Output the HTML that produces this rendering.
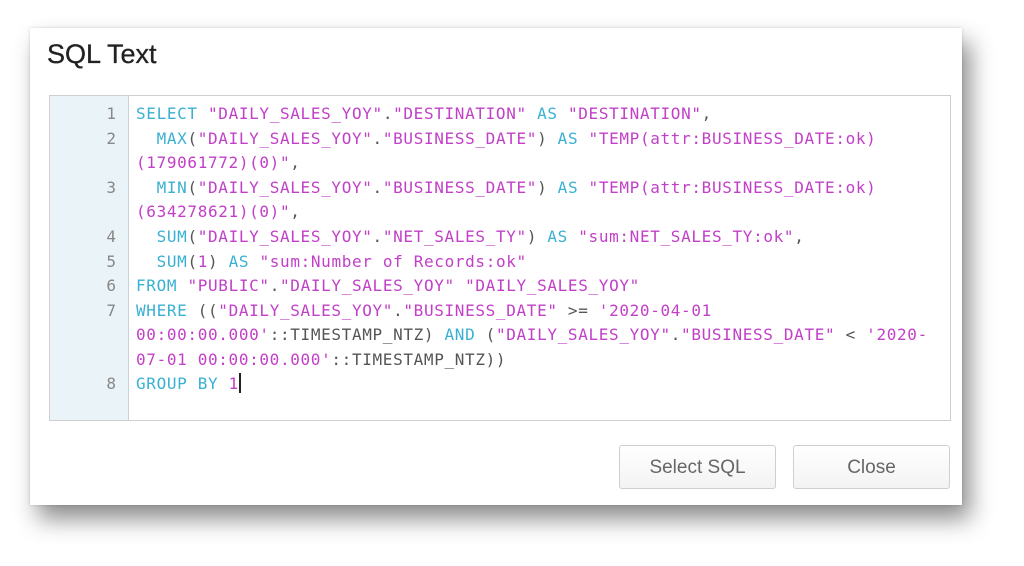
<!DOCTYPE html>
<html><head><meta charset="utf-8"><style>
html,body{margin:0;padding:0;background:#fff;width:1024px;height:566px;overflow:hidden;}
.dlg{position:absolute;left:30px;top:28px;width:932px;height:477px;background:#fff;box-shadow:8px 14px 22px rgba(0,0,0,0.45),0 0 3px rgba(0,0,0,0.15);}
.title{position:absolute;left:17px;top:11px;font:27px "Liberation Sans",sans-serif;color:#222;-webkit-text-stroke:0.3px #222;}
.box{position:absolute;left:19px;top:67px;width:900px;height:324px;border:1px solid #cfcfcf;background:#fff;}
.gut{position:absolute;left:0;top:0;width:78px;height:324px;background:#eaf3f7;border-right:1px solid #c8d2d8;}
.code{position:absolute;left:0;top:6px;font:16px "DejaVu Sans Mono","Liberation Mono",monospace;letter-spacing:0.65px;line-height:24.5px;color:#555;white-space:pre;}
.ln{position:absolute;left:0;width:66px;text-align:right;color:#888;letter-spacing:0;}
.tx{position:absolute;left:86px;}
.k{color:#3ab0d2}.s{color:#c23fc8}
.btn{position:absolute;top:417px;width:157px;height:44px;border:1px solid #cfcfcf;border-radius:3px;background:linear-gradient(#fff,#f3f3f3);font:19px "Liberation Sans",sans-serif;color:#666;text-align:center;line-height:44px;box-sizing:border-box;}
.cur{display:inline-block;width:2px;height:20px;background:#222;vertical-align:-4px;}
</style></head><body>
<div class="dlg">
<div class="title">SQL Text</div>
<div class="box"><div class="gut"></div>
<div class="code">
<div class="ln" style="top:0">1</div><div class="tx" style="top:0"><span class="k">SELECT</span> <span class="s">"DAILY_SALES_YOY"</span>.<span class="s">"DESTINATION"</span> <span class="k">AS</span> <span class="s">"DESTINATION"</span>,</div>
<div class="ln" style="top:24.5px">2</div><div class="tx" style="top:24.5px">  <span class="k">MAX</span>(<span class="s">"DAILY_SALES_YOY"</span>.<span class="s">"BUSINESS_DATE"</span>) <span class="k">AS</span> <span class="s">"TEMP(attr:BUSINESS_DATE:ok)</span></div>
<div class="tx" style="top:49px"><span class="s">(179061772)(0)"</span>,</div>
<div class="ln" style="top:73.5px">3</div><div class="tx" style="top:73.5px">  <span class="k">MIN</span>(<span class="s">"DAILY_SALES_YOY"</span>.<span class="s">"BUSINESS_DATE"</span>) <span class="k">AS</span> <span class="s">"TEMP(attr:BUSINESS_DATE:ok)</span></div>
<div class="tx" style="top:98px"><span class="s">(634278621)(0)"</span>,</div>
<div class="ln" style="top:123px">4</div><div class="tx" style="top:123px">  <span class="k">SUM</span>(<span class="s">"DAILY_SALES_YOY"</span>.<span class="s">"NET_SALES_TY"</span>) <span class="k">AS</span> <span class="s">"sum:NET_SALES_TY:ok"</span>,</div>
<div class="ln" style="top:147.5px">5</div><div class="tx" style="top:147.5px">  <span class="k">SUM</span>(<span class="s">1</span>) <span class="k">AS</span> <span class="s">"sum:Number of Records:ok"</span></div>
<div class="ln" style="top:172px">6</div><div class="tx" style="top:172px"><span class="k">FROM</span> <span class="s">"PUBLIC"</span>.<span class="s">"DAILY_SALES_YOY"</span> <span class="s">"DAILY_SALES_YOY"</span></div>
<div class="ln" style="top:196.5px">7</div><div class="tx" style="top:196.5px"><span class="k">WHERE</span> ((<span class="s">"DAILY_SALES_YOY"</span>.<span class="s">"BUSINESS_DATE"</span> &gt;= <span class="s">'2020-04-01</span></div>
<div class="tx" style="top:221px"><span class="s">00:00:00.000'</span>::TIMESTAMP_NTZ) <span class="k">AND</span> (<span class="s">"DAILY_SALES_YOY"</span>.<span class="s">"BUSINESS_DATE"</span> &lt; <span class="s">'2020-</span></div>
<div class="tx" style="top:245.5px"><span class="s">07-01 00:00:00.000'</span>::TIMESTAMP_NTZ))</div>
<div class="ln" style="top:270px">8</div><div class="tx" style="top:270px"><span class="k">GROUP BY</span> <span class="s">1</span><span class="cur"></span></div>
</div></div>
<div class="btn" style="left:589px">Select SQL</div>
<div class="btn" style="left:763px">Close</div>
</div>
</body></html>
